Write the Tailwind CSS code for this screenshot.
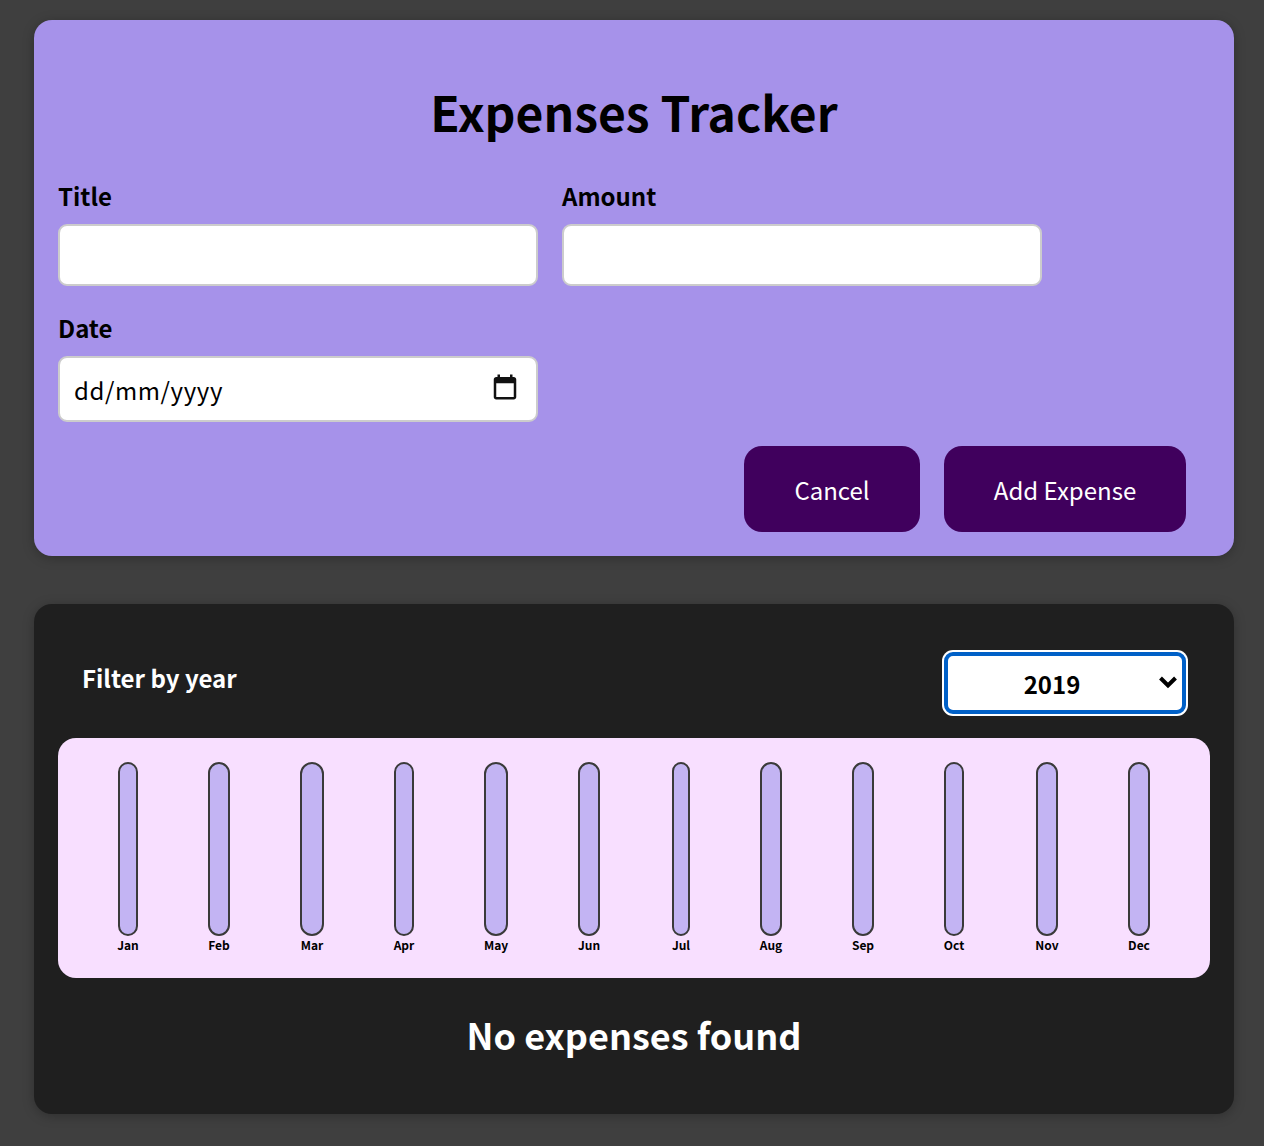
<!DOCTYPE html>
<html lang="en">
<head>
  <meta charset="UTF-8">
  <meta name="viewport" content="width=device-width, initial-scale=1.0">
  <title>Expenses Tracker</title>
  <script src="https://cdn.jsdelivr.net/npm/@tailwindcss/browser@4"></script>
</head>
<body class="bg-[#3f3f3f] font-['Noto_Sans_CJK_JP',sans-serif] text-black">
  <main class="w-[1200px] ml-[34px] pt-5 pb-8 flex flex-col gap-12">

    <!-- New expense form -->
    <section class="bg-[#a692ea] rounded-[18px] p-6 h-[536px] shadow-[0_2px_12px_rgba(0,0,0,0.25)]">
      <h1 class="text-center text-[48px] leading-[72px] font-bold mt-[31px] mb-[31px]">Expenses Tracker</h1>
      <form>
        <div class="flex flex-wrap gap-x-6 gap-y-6 w-[1008px]">
          <div class="w-[480px]">
            <label class="block text-[24px] leading-[36px] font-bold mb-[10px]">Title</label>
            <input type="text" class="block w-full h-[62px] bg-white border-2 border-[#ccc] rounded-[9px] px-3">
          </div>
          <div class="w-[480px]">
            <label class="block text-[24px] leading-[36px] font-bold mb-[10px]">Amount</label>
            <input type="text" class="block w-full h-[62px] bg-white border-2 border-[#ccc] rounded-[9px] px-3">
          </div>
          <div class="w-[480px]">
            <label class="block text-[24px] leading-[36px] font-bold mb-[10px]">Date</label>
            <div class="w-full h-[66px] bg-white border-2 border-[#ccc] rounded-[9px] pl-[14px] pr-[18px] flex items-center justify-between">
              <span class="text-[24px] leading-[36px] tracking-[0.6px] mt-[2px]">dd/mm/yyyy</span>
              <svg class="w-[30px] h-[30px] -mt-[4px] -mr-[2px]" viewBox="0 0 24 24" fill="#111"><path d="M19 4h-1V2h-2v2H8V2H6v2H5c-1.1 0-2 .9-2 2v14c0 1.1.9 2 2 2h14c1.1 0 2-.9 2-2V6c0-1.1-.9-2-2-2zm0 16H5V9h14v11z"/></svg>
            </div>
          </div>
        </div>
        <div class="flex justify-end gap-6 mt-6 mr-6">
          <button type="button" class="w-[176px] h-[86px] pt-[2px] bg-[#40005d] text-white text-[24px] rounded-[18px]">Cancel</button>
          <button type="button" class="w-[242px] h-[86px] pt-[2px] bg-[#40005d] text-white text-[24px] rounded-[18px]">Add Expense</button>
        </div>
      </form>
    </section>

    <!-- Expense list -->
    <section class="bg-[#1f1f1f] rounded-[18px] p-6 h-[510px] shadow-[0_2px_12px_rgba(0,0,0,0.25)]">
      <div class="flex items-center justify-between px-6 mt-6 mb-6">
        <label class="text-white text-[24px] leading-[40px] font-bold mb-[10px]">Filter by year</label>
        <div class="relative">
          <select class="appearance-none block w-[242px] h-[62px] pt-[2px] bg-white border-4 border-[#0060c7] ring-2 ring-white rounded-[9px] text-center text-[24px] font-bold pr-[26px]">
            <option>2019</option>
            <option>2020</option>
            <option>2021</option>
            <option>2022</option>
          </select>
          <svg class="absolute right-[8px] top-[23px] w-[20px] h-[14px]" viewBox="0 0 20 14" fill="none" stroke="#000" stroke-width="4"><path d="M2.5 3l7.5 7.5L17.5 3"/></svg>
        </div>
      </div>

      <!-- Chart -->
      <div class="h-[240px] bg-[#f8dfff] rounded-[18px] py-6 pl-[60px] flex gap-[70px]">
        <div class="flex flex-col items-center h-full w-[20px]"><div class="flex-1 w-full bg-[#c3b4f3] border-2 border-[#3a3a3a] rounded-[12px]"></div><span class="text-[12px] leading-[18px] font-bold">Jan</span></div>
        <div class="flex flex-col items-center h-full w-[22px]"><div class="flex-1 w-full bg-[#c3b4f3] border-2 border-[#3a3a3a] rounded-[12px]"></div><span class="text-[12px] leading-[18px] font-bold">Feb</span></div>
        <div class="flex flex-col items-center h-full w-[24px]"><div class="flex-1 w-full bg-[#c3b4f3] border-2 border-[#3a3a3a] rounded-[12px]"></div><span class="text-[12px] leading-[18px] font-bold">Mar</span></div>
        <div class="flex flex-col items-center h-full w-[20px]"><div class="flex-1 w-full bg-[#c3b4f3] border-2 border-[#3a3a3a] rounded-[12px]"></div><span class="text-[12px] leading-[18px] font-bold">Apr</span></div>
        <div class="flex flex-col items-center h-full w-[24px]"><div class="flex-1 w-full bg-[#c3b4f3] border-2 border-[#3a3a3a] rounded-[12px]"></div><span class="text-[12px] leading-[18px] font-bold">May</span></div>
        <div class="flex flex-col items-center h-full w-[22px]"><div class="flex-1 w-full bg-[#c3b4f3] border-2 border-[#3a3a3a] rounded-[12px]"></div><span class="text-[12px] leading-[18px] font-bold">Jun</span></div>
        <div class="flex flex-col items-center h-full w-[18px] ml-[2px]"><div class="flex-1 w-full bg-[#c3b4f3] border-2 border-[#3a3a3a] rounded-[12px]"></div><span class="text-[12px] leading-[18px] font-bold">Jul</span></div>
        <div class="flex flex-col items-center h-full w-[22px]"><div class="flex-1 w-full bg-[#c3b4f3] border-2 border-[#3a3a3a] rounded-[12px]"></div><span class="text-[12px] leading-[18px] font-bold">Aug</span></div>
        <div class="flex flex-col items-center h-full w-[22px]"><div class="flex-1 w-full bg-[#c3b4f3] border-2 border-[#3a3a3a] rounded-[12px]"></div><span class="text-[12px] leading-[18px] font-bold">Sep</span></div>
        <div class="flex flex-col items-center h-full w-[20px]"><div class="flex-1 w-full bg-[#c3b4f3] border-2 border-[#3a3a3a] rounded-[12px]"></div><span class="text-[12px] leading-[18px] font-bold">Oct</span></div>
        <div class="flex flex-col items-center h-full w-[22px] ml-[2px]"><div class="flex-1 w-full bg-[#c3b4f3] border-2 border-[#3a3a3a] rounded-[12px]"></div><span class="text-[12px] leading-[18px] font-bold">Nov</span></div>
        <div class="flex flex-col items-center h-full w-[22px]"><div class="flex-1 w-full bg-[#c3b4f3] border-2 border-[#3a3a3a] rounded-[12px]"></div><span class="text-[12px] leading-[18px] font-bold">Dec</span></div>
      </div>

      <h2 class="text-white text-center text-[36px] leading-[54px] font-bold mt-[29px]">No expenses found</h2>
    </section>
  </main>
</body>
</html>
